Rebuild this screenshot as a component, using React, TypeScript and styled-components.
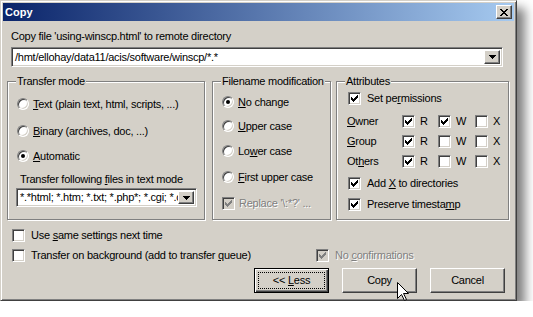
import styled, { createGlobalStyle, css } from 'styled-components'

const face = '#d4d0c8'

const GlobalStyle = createGlobalStyle`
  body {
    margin: 0;
    background: #ffffff;
    font-family: 'Liberation Sans', Arial, sans-serif;
    font-size: 11px;
    line-height: 13px;
    letter-spacing: -0.25px;
    color: #000000;
  }
`

const sunken = css`
  border: 1px solid;
  border-color: #808080 #ffffff #ffffff #808080;
  box-shadow: inset 1px 1px 0 #404040, inset -1px -1px 0 ${face};
`

const raised = css`
  border: 1px solid;
  border-color: #ffffff #404040 #404040 #ffffff;
  box-shadow: inset -1px -1px 0 #808080, inset 1px 1px 0 ${face};
`

const Window = styled.div`
  position: relative;
  width: 517px;
  height: 301px;
  box-sizing: border-box;
  padding: 2px;
  background: ${face};
  border: 1px solid;
  border-color: ${face} #404040 #404040 ${face};
  box-shadow: inset 1px 1px 0 #ffffff, inset -1px -1px 0 #808080,
    8px 8px 10px rgba(0, 0, 0, 0.5);
`

const TitleBar = styled.div`
  height: 18px;
  display: flex;
  align-items: center;
  justify-content: space-between;
  padding: 0 2px;
  background: linear-gradient(to right, #0a246a, #a6caf0);
`

const Title = styled.span`
  color: #ffffff;
  font-weight: bold;
  font-size: 11px;
  letter-spacing: 0;
`

const CloseButton = styled.span`
  width: 16px;
  height: 14px;
  box-sizing: border-box;
  display: flex;
  align-items: center;
  justify-content: center;
  background: ${face};
  ${raised}
`

const Body = styled.div`
  padding: 0 5px 0 4px;
`

const Caption = styled.div`
  margin: 9px 0 0 4px;
`

const Combo = styled.div<{ $w: number; $h: number; $mt?: number; $ml?: number }>`
  width: ${p => p.$w}px;
  height: ${p => p.$h}px;
  margin-top: ${p => p.$mt ?? 0}px;
  margin-left: ${p => p.$ml ?? 0}px;
  box-sizing: border-box;
  display: flex;
  align-items: stretch;
  padding: 2px;
  background: #ffffff;
  ${sunken}
`

const ComboText = styled.span`
  flex: 1;
  overflow: hidden;
  white-space: nowrap;
  padding-left: 1px;
  display: flex;
  align-items: center;
`

const DropButton = styled.span`
  width: 16px;
  flex: none;
  box-sizing: border-box;
  display: flex;
  align-items: center;
  justify-content: center;
  background: ${face};
  ${raised}
`

const Groups = styled.div`
  display: flex;
  margin-top: 14px;
`

const GroupBox = styled.div<{ $w: number; $gap?: number }>`
  position: relative;
  width: ${p => p.$w}px;
  height: 139px;
  margin-left: ${p => p.$gap ?? 0}px;
  box-sizing: border-box;
  padding-left: 8px;
  border: 1px solid #808080;
  box-shadow: inset 1px 1px 0 #ffffff, 1px 1px 0 #ffffff;
  display: flex;
  flex-direction: column;
`

const Legend = styled.span`
  position: absolute;
  top: -7px;
  left: 8px;
  padding: 0 1px;
  background: ${face};
`

const Row = styled.label<{ $mt: number; $pl?: number }>`
  display: flex;
  align-items: center;
  height: 16px;
  margin-top: ${p => p.$mt}px;
  padding-left: ${p => p.$pl ?? 1}px;
  white-space: nowrap;
`

const Text = styled.span<{ $gap: number; $disabled?: boolean }>`
  margin-left: ${p => p.$gap}px;
  ${p =>
    p.$disabled &&
    css`
      color: #808080;
      text-shadow: 1px 1px 0 #ffffff;
    `}
`

const Plain = styled.div<{ $mt: number; $ml: number }>`
  margin-top: ${p => p.$mt}px;
  margin-left: ${p => p.$ml}px;
`

const Key = styled.u`
  text-underline-offset: 1px;
`

const RadioDot = styled.span<{ $on?: boolean }>`
  position: relative;
  flex: none;
  width: 12px;
  height: 12px;
  box-sizing: border-box;
  border-radius: 50%;
  background: #ffffff;
  ${sunken}

  &::after {
    content: '';
    display: ${p => (p.$on ? 'block' : 'none')};
    position: absolute;
    left: 3px;
    top: 3px;
    width: 4px;
    height: 4px;
    border-radius: 50%;
    background: #000000;
  }
`

const Box = styled.span<{ $disabled?: boolean }>`
  flex: none;
  width: 13px;
  height: 13px;
  box-sizing: border-box;
  display: flex;
  align-items: center;
  justify-content: center;
  background: ${p => (p.$disabled ? face : '#ffffff')};
  ${sunken}
`

const PermGrid = styled.div<{ $mt: number }>`
  display: grid;
  grid-template-columns: 55px 36px 37px auto;
  align-items: center;
  height: 16px;
  margin-top: ${p => p.$mt}px;
  padding-left: 2px;
`

const PermCell = styled.span`
  display: flex;
  align-items: center;
  gap: 5px;
`

const BottomRow = styled.div<{ $mt: number }>`
  display: grid;
  grid-template-columns: 304px auto;
  align-items: center;
  height: 13px;
  margin-top: ${p => p.$mt}px;
  padding-left: 5px;
`

const Item = styled.span`
  display: flex;
  align-items: center;
  white-space: nowrap;
`

const ButtonRow = styled.div`
  display: flex;
  justify-content: flex-end;
  gap: 13px;
  margin: 6px 4px 0 0;
`

const Button = styled.button<{ $focused?: boolean }>`
  position: relative;
  width: 75px;
  height: 25px;
  box-sizing: border-box;
  padding: 0;
  font: inherit;
  letter-spacing: inherit;
  color: #000000;
  background: ${face};
  ${raised}

  ${p =>
    p.$focused &&
    css`
      border-color: #000000;
      box-shadow: inset 1px 1px 0 #ffffff, inset -1px -1px 0 #404040,
        inset -2px -2px 0 #808080;

      &::after {
        content: '';
        position: absolute;
        inset: 3px;
        border: 1px dotted #000000;
      }
    `}
`

const Pointer = styled.svg`
  position: absolute;
  left: 396px;
  top: 281px;
`

const CHECK_COLS = [0, 1, 2, 3, 4, 5, 6].map(x => [x, x < 3 ? 2 + x : 6 - x])

function CheckMark({ color }: { color: string }) {
  return (
    <svg width="7" height="7" viewBox="0 0 7 7" shapeRendering="crispEdges">
      {CHECK_COLS.map(([x, y]) => (
        <rect key={x} x={x} y={y} width="1" height="3" fill={color} />
      ))}
    </svg>
  )
}

function Check({ on = false, disabled = false }: { on?: boolean; disabled?: boolean }) {
  return <Box $disabled={disabled}>{on && <CheckMark color={disabled ? '#808080' : '#000'} />}</Box>
}

const X_ROWS = [
  [[0, 2], [6, 2]],
  [[1, 2], [5, 2]],
  [[2, 4]],
  [[3, 2]],
  [[2, 4]],
  [[1, 2], [5, 2]],
  [[0, 2], [6, 2]],
]

function CloseGlyph() {
  return (
    <svg width="8" height="7" viewBox="0 0 8 7" shapeRendering="crispEdges">
      {X_ROWS.flatMap((row, y) =>
        row.map(([x, w]) => <rect key={`${y}-${x}`} x={x} y={y} width={w} height="1" fill="#000" />)
      )}
    </svg>
  )
}

function Arrow() {
  return (
    <svg width="7" height="4" viewBox="0 0 7 4" shapeRendering="crispEdges">
      <rect x="0" y="0" width="7" height="1" fill="#000" />
      <rect x="1" y="1" width="5" height="1" fill="#000" />
      <rect x="2" y="2" width="3" height="1" fill="#000" />
      <rect x="3" y="3" width="1" height="1" fill="#000" />
    </svg>
  )
}

export default function App() {
  return (
    <>
      <GlobalStyle />
      <Window>
        <TitleBar>
          <Title>Copy</Title>
          <CloseButton>
            <CloseGlyph />
          </CloseButton>
        </TitleBar>

        <Body>
          <Caption>Copy file 'using-winscp.html' to remote directory</Caption>
          <Combo $w={492} $h={20} $mt={4} $ml={4}>
            <ComboText>/hmt/ellohay/data11/acis/software/winscp/*.*</ComboText>
            <DropButton>
              <Arrow />
            </DropButton>
          </Combo>

          <Groups>
            <GroupBox $w={198}>
              <Legend>Transfer mode</Legend>
              <Row $mt={14}>
                <RadioDot />
                <Text $gap={4}>
                  <Key>T</Key>ext (plain text, html, scripts, ...)
                </Text>
              </Row>
              <Row $mt={11}>
                <RadioDot />
                <Text $gap={4}>
                  <Key>B</Key>inary (archives, doc, ...)
                </Text>
              </Row>
              <Row $mt={9}>
                <RadioDot $on />
                <Text $gap={4}>
                  <Key>A</Key>utomatic
                </Text>
              </Row>
              <Plain $mt={9} $ml={4}>
                Transfer following <Key>f</Key>iles in text mode
              </Plain>
              <Combo $w={181} $h={19} $mt={2}>
                <ComboText>*.*html; *.htm; *.txt; *.php*; *.cgi; *.c</ComboText>
                <DropButton>
                  <Arrow />
                </DropButton>
              </Combo>
            </GroupBox>

            <GroupBox $w={119} $gap={7}>
              <Legend>Filename modification</Legend>
              <Row $mt={12}>
                <RadioDot $on />
                <Text $gap={4}>
                  <Key>N</Key>o change
                </Text>
              </Row>
              <Row $mt={8}>
                <RadioDot />
                <Text $gap={4}>
                  <Key>U</Key>pper case
                </Text>
              </Row>
              <Row $mt={9}>
                <RadioDot />
                <Text $gap={4}>
                  Lo<Key>w</Key>er case
                </Text>
              </Row>
              <Row $mt={10}>
                <RadioDot />
                <Text $gap={4}>
                  <Key>F</Key>irst upper case
                </Text>
              </Row>
              <Row $mt={10}>
                <Check on disabled />
                <Text $gap={4} $disabled>
                  Replace '\:*?' ...
                </Text>
              </Row>
            </GroupBox>

            <GroupBox $w={173} $gap={5}>
              <Legend>Attributes</Legend>
              <Row $mt={8} $pl={3}>
                <Check on />
                <Text $gap={6}>
                  Set pe<Key>r</Key>missions
                </Text>
              </Row>
              <PermGrid $mt={7}>
                <span>
                  <Key>O</Key>wner
                </span>
                <PermCell>
                  <Check on />R
                </PermCell>
                <PermCell>
                  <Check on />W
                </PermCell>
                <PermCell>
                  <Check />X
                </PermCell>
              </PermGrid>
              <PermGrid $mt={4}>
                <span>
                  <Key>G</Key>roup
                </span>
                <PermCell>
                  <Check on />R
                </PermCell>
                <PermCell>
                  <Check />W
                </PermCell>
                <PermCell>
                  <Check />X
                </PermCell>
              </PermGrid>
              <PermGrid $mt={4}>
                <span>
                  Ot<Key>h</Key>ers
                </span>
                <PermCell>
                  <Check on />R
                </PermCell>
                <PermCell>
                  <Check />W
                </PermCell>
                <PermCell>
                  <Check />X
                </PermCell>
              </PermGrid>
              <Row $mt={6} $pl={3}>
                <Check on />
                <Text $gap={6}>
                  Add <Key>X</Key> to directories
                </Text>
              </Row>
              <Row $mt={5} $pl={3}>
                <Check on />
                <Text $gap={6}>
                  Preserve timesta<Key>m</Key>p
                </Text>
              </Row>
            </GroupBox>
          </Groups>

          <BottomRow $mt={9}>
            <Item>
              <Check />
              <Text $gap={6}>
                Use <Key>s</Key>ame settings next time
              </Text>
            </Item>
          </BottomRow>
          <BottomRow $mt={7}>
            <Item>
              <Check />
              <Text $gap={6}>
                Transfer on background (add to transfer <Key>q</Key>ueue)
              </Text>
            </Item>
            <Item>
              <Check on disabled />
              <Text $gap={6} $disabled>
                No <Key>c</Key>onfirmations
              </Text>
            </Item>
          </BottomRow>

          <ButtonRow>
            <Button $focused>
              &lt;&lt; <Key>L</Key>ess
            </Button>
            <Button>Copy</Button>
            <Button>Cancel</Button>
          </ButtonRow>
        </Body>

        <Pointer width="12" height="20" viewBox="0 0 12 20">
          <path
            d="M0.5 0.5 V16.5 L4.5 12.5 L7.5 18.5 L9.5 17.5 L6.5 11.5 H11.5 Z"
            fill="#fff"
            stroke="#000"
            strokeWidth="1"
          />
        </Pointer>
      </Window>
    </>
  )
}
